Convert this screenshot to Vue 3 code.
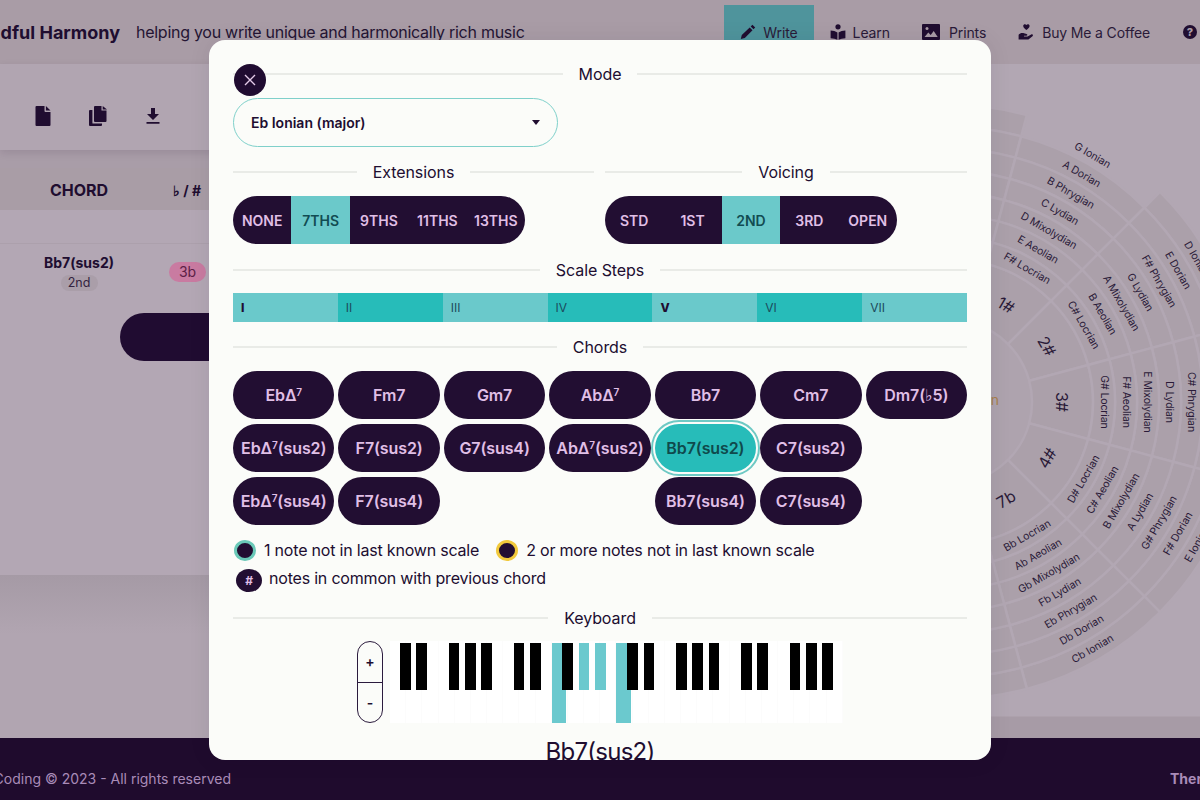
<script setup>
const cx = 950
const cy = 402
const polar = (r, deg) => {
  const a = (deg * Math.PI) / 180
  return [cx + r * Math.sin(a), cy - r * Math.cos(a)]
}
const sector = (r0, r1, a0, a1) => {
  const [x0, y0] = polar(r1, a0)
  const [x1, y1] = polar(r1, a1)
  const [x2, y2] = polar(r0, a1)
  const [x3, y3] = polar(r0, a0)
  return `M${x0} ${y0}A${r1} ${r1} 0 0 1 ${x1} ${y1}L${x2} ${y2}A${r0} ${r0} 0 0 0 ${x3} ${y3}Z`
}
const seg = [
  { a: 0, key: '', modes: [] },
  { a: 30, key: '1#', skip: true, modes: ['G Ionian', 'A Dorian', 'B Phrygian', 'C Lydian', 'D Mixolydian', 'E Aeolian', 'F# Locrian'] },
  { a: 60, key: '2#', modes: ['D Ionian', 'E Dorian', 'F# Phrygian', 'G Lydian', 'A Mixolydian', 'B Aeolian', 'C# Locrian'] },
  { a: 90, key: '3#', modes: ['A Ionian', 'B Dorian', 'C# Phrygian', 'D Lydian', 'E Mixolydian', 'F# Aeolian', 'G# Locrian'] },
  { a: 120, key: '4#', modes: ['E Ionian', 'F# Dorian', 'G# Phrygian', 'A Lydian', 'B Mixolydian', 'C# Aeolian', 'D# Locrian'] },
  { a: 150, key: '7b', modes: ['Cb Ionian', 'Db Dorian', 'Eb Phrygian', 'Fb Lydian', 'Gb Mixolydian', 'Ab Aeolian', 'Bb Locrian'] },
  { a: 180, key: '', modes: [] }
]
const bands = []
const labels = []
const keys = []
seg.forEach((s) => {
  const a0 = s.a - 15
  const a1 = s.a + 15
  const rot = s.a > 90 ? s.a - 180 : s.a
  bands.push(sector(82, 143, a0, a1))
  for (let i = 0; i < 7; i++) {
    if (s.skip && i === 0) continue
    bands.push(sector(143 + 22 * (6 - i), 165 + 22 * (6 - i), a0, a1))
  }
  if (s.key) {
    const [x, y] = polar(112, s.a)
    keys.push({ t: s.key, x, y, tr: `rotate(${rot} ${x} ${y})` })
  }
  s.modes.forEach((m, i) => {
    const [x, y] = polar(285 - 21.8 * i, s.a)
    labels.push({ t: m, x, y, tr: `rotate(${rot} ${x} ${y})` })
  })
})

const extensions = ['NONE', '7THS', '9THS', '11THS', '13THS']
const voicings = ['STD', '1ST', '2ND', '3RD', 'OPEN']
const steps = [
  { t: 'I', b: true }, { t: 'II' }, { t: 'III' }, { t: 'IV' },
  { t: 'V', b: true }, { t: 'VI' }, { t: 'VII' }
]
const chords = [
  [['Eb', true], ['Fm7'], ['Gm7'], ['Ab', true], ['Bb7'], ['Cm7'], ['Dm7(♭5)']],
  [['Eb', true, '(sus2)'], ['F7(sus2)'], ['G7(sus4)'], ['Ab', true, '(sus2)'], ['Bb7(sus2)'], ['C7(sus2)'], null],
  [['Eb', true, '(sus4)'], ['F7(sus4)'], null, null, ['Bb7(sus4)'], ['C7(sus4)'], null]
].flat().map((c) => c && { root: c[0], maj: !!c[1], tail: c[2] || '' })

const whites = Array.from({ length: 28 }, (_, i) => ({ on: i === 10 || i === 14 }))
const blackLefts = [400, 416.3, 448.7, 465, 481, 513.7, 530, 562.3, 578.7, 595, 627.3, 643.7, 676.3, 692.3, 708.7, 741.3, 757.3, 789.7, 806, 822.3]
const blacks = blackLefts.map((x) => ({ left: x - 390, on: x === 578.7 || x === 595 }))
</script>

<template>
  <div class="page">
    <header class="top">
      <div class="brand"><span>Mindful Harmony</span></div>
      <div class="tag">helping you write unique and harmonically rich music</div>
      <nav class="nav">
        <a class="tab active">
          <svg width="16" height="16" viewBox="0 0 16 16"><path d="M12.4 .8l2.8 2.8-1.7 1.7-2.8-2.8zM9.7 3.5l2.8 2.8-7.7 7.7-4 1 1-4z" /></svg>
          <span>Write</span>
        </a>
        <a class="tab">
          <svg width="16" height="16" viewBox="0 0 16 16"><circle cx="8" cy="2.8" r="2.6" /><path d="M.6 6.6c2.6 0 5 .7 6.8 2v7.2c-1.8-1-4.2-1.5-6.8-1.6zM15.4 6.6c-2.6 0-5 .7-6.8 2v7.2c1.8-1 4.2-1.5 6.8-1.6z" /></svg>
          <span>Learn</span>
        </a>
        <a class="tab prints">
          <svg width="18" height="16" viewBox="0 0 18 16"><rect width="18" height="16" rx="1" /><path class="cut" d="M2.5 13l3.8-4.6 2.4 2.6 3-4 4 6z" /><circle class="cut" cx="5" cy="4.6" r="1.5" /></svg>
          <span>Prints</span>
        </a>
        <a class="tab coffee">
          <svg width="16" height="16" viewBox="0 0 16 16"><path d="M8.4 .9c-1.1-1.2-3.2-.6-3.2 1.1 0 1.6 2 3 3.2 4 1.2-1 3.2-2.4 3.2-4 0-1.7-2.1-2.3-3.2-1.1zM.6 10.8c1.2-1.6 3-2.2 4.6-1.8l3.4.9c1.2.3 1 1.9-.2 1.9H6v.8h3.6l3.6-2.2c1.2-.6 2.4.8 1.3 1.8L10.4 15.5H.6z" /></svg>
          <span>Buy Me a Coffee</span>
        </a>
        <span class="help">?</span>
      </nav>
    </header>

    <main class="main">
      <section class="left">
        <div class="toolbar">
          <svg width="16" height="20" viewBox="0 0 15 20"><path d="M0 1a1 1 0 0 1 1-1h8v5a1 1 0 0 0 1 1h5v13a1 1 0 0 1-1 1H1a1 1 0 0 1-1-1zM10.4 0L15 4.6h-4.6z" /></svg>
          <svg width="19" height="20" viewBox="0 0 19 20"><path d="M5 1a1 1 0 0 1 1-1h6.5v4.5h5V15a1 1 0 0 1-1 1H6a1 1 0 0 1-1-1zM13.7 0L18 3.500h-4.300z" /><path d="M3.400 4H1a1 1 0 0 0-1 1v14a1 1 0 0 0 1 1h11a1 1 0 0 0 1-1v-1.500H4a.6.6 0 0 1-.6-.6z" /></svg>
          <svg width="14" height="16" viewBox="0 0 14 16"><path d="M5 0h4v6h4l-6 6-6-6h4zM.5 14h13v1.800H.5z" /></svg>
        </div>
        <div class="card">
          <div class="thead">
            <div class="th-chord">CHORD</div>
            <div class="th-acc">♭ / #</div>
          </div>
          <div class="blank"></div>
          <div class="row">
            <div class="cell-chord">
              <strong>Bb7(sus2)</strong>
              <span class="inv">2nd</span>
            </div>
            <span class="acc">3b</span>
          </div>
          <div class="add"></div>
        </div>
      </section>
      <section class="right">
        <div class="panel">
          <svg class="wheel" width="600" height="653" viewBox="600 64 600 653">
            <circle :cx="cx" :cy="cy" r="82" fill="#aea3ae" />
            <path v-for="(d, i) in bands" :key="i" :d="d" class="band" />
            <text x="999" :y="cy - 3" class="center">Eb Ionian</text>
            <text v-for="k in keys" :key="k.t" :x="k.x" :y="k.y" :transform="k.tr" class="keytxt">{{ k.t }}</text>
            <text v-for="l in labels" :key="l.t" :x="l.x" :y="l.y" :transform="l.tr" class="mode">{{ l.t }}</text>
          </svg>
        </div>
      </section>
    </main>

    <footer class="foot">
      <div class="copy"><span>Mindful Coding © 2023 - All rights reserved</span></div>
      <div class="theme">Theme</div>
    </footer>

    <div class="modal">
      <button class="close" aria-label="Close">
        <svg width="12" height="12" viewBox="0 0 12 12"><path d="M1 1l10 10M11 1L1 11" /></svg>
      </button>
      <div class="divider">Mode</div>
      <div class="select">
        <span>Eb Ionian (major)</span>
        <svg width="8" height="5" viewBox="0 0 8 5"><path d="M0 0h8L4 5z" /></svg>
      </div>
      <div class="cols">
        <div class="col">
          <div class="divider">Extensions</div>
          <div class="join">
            <button v-for="e in extensions" :key="e" :class="{ on: e === '7THS' }">{{ e }}</button>
          </div>
        </div>
        <div class="col">
          <div class="divider">Voicing</div>
          <div class="join">
            <button v-for="v in voicings" :key="v" :class="{ on: v === '2ND' }">{{ v }}</button>
          </div>
        </div>
      </div>
      <div class="divider d-steps">Scale Steps</div>
      <div class="steps">
        <div v-for="(s, i) in steps" :key="s.t" class="step" :class="{ alt: i % 2 === 1, bold: s.b }">{{ s.t }}</div>
      </div>
      <div class="divider d-chords">Chords</div>
      <div class="chords">
        <template v-for="(c, i) in chords" :key="i">
          <button v-if="c" class="chord" :class="{ sel: c.root === 'Bb7(sus2)' }">{{ c.root }}<template v-if="c.maj">Δ<sup>7</sup></template>{{ c.tail }}</button>
          <span v-else></span>
        </template>
      </div>
      <div class="legend">
        <span class="dot teal"></span><span class="lt">1 note not in last known scale</span>
        <span class="dot gold"></span><span>2 or more notes not in last known scale</span>
      </div>
      <div class="legend l2">
        <span class="hash">#</span><span class="lift">notes in common with previous chord</span>
      </div>
      <div class="divider d-keys">Keyboard</div>
      <div class="kbd">
        <div class="zoom">
          <span>+</span>
          <span>-</span>
        </div>
        <div class="piano">
          <div v-for="(w, i) in whites" :key="i" class="white"><i v-if="w.on"></i></div>
          <div v-for="(b, i) in blacks" :key="i" class="black" :class="{ on: b.on }" :style="{ left: b.left + 'px' }"></div>
        </div>
      </div>
      <div class="title">Bb7(sus2)</div>
    </div>
  </div>
</template>

<style scoped>
.page {
  position: relative;
  width: 1200px;
  height: 800px;
  overflow: hidden;
  display: flex;
  flex-direction: column;
  background: #a99da8;
  color: #200d30;
  font-family: Inter, "Noto Sans", sans-serif;
}
.top {
  height: 64px;
  flex: none;
  display: flex;
  align-items: center;
  background: #a99ca6;
  white-space: nowrap;
}
.brand {
  width: 120px;
  display: flex;
  justify-content: flex-end;
  font-size: 18px;
  font-weight: 700;
}
.tag {
  margin-left: 16px;
  font-size: 16px;
  letter-spacing: -0.27px;
  color: #241433;
}
.nav {
  margin-left: auto;
  display: flex;
  align-items: center;
  height: 64px;
  font-size: 14px;
  letter-spacing: -0.1px;
  color: #2a1a38;
}
.tab {
  display: flex;
  align-items: center;
  gap: 7px;
  height: 55px;
  margin-top: 9px;
  padding: 0 16px 9px;
}
.tab.prints { gap: 9px; }
.tab.coffee { gap: 8px; letter-spacing: -0.16px; }
.tab svg { fill: #200d30; flex: none; }
.tab svg .cut { fill: #a99ca6; }
.tab.active {
  background: #4f949c;
}
.help {
  width: 14px;
  height: 14px;
  margin: 0 3px 0 17px;
  border-radius: 50%;
  background: #200d30;
  color: #a99ca6;
  font-size: 11px;
  font-weight: 800;
  line-height: 14px;
  text-align: center;
}
.main {
  flex: 1;
  display: flex;
  min-height: 0;
}
.left {
  width: 600px;
  display: flex;
  flex-direction: column;
  background: linear-gradient(#a59aa5, #b1a5b1 60px);
  background-position: 0 510px;
  background-repeat: no-repeat;
}
.toolbar {
  height: 86px;
  flex: none;
  box-sizing: border-box;
  display: flex;
  align-items: center;
  gap: 38px;
  padding: 18px 0 0 35px;
  background: #b1a5b1;
  box-shadow: 0 3px 8px rgba(40, 20, 50, .12);
}
.toolbar svg { fill: #200d30; flex: none; }
.card {
  margin-top: 18px;
  height: 407px;
  background: #b3a7b4;
}
.thead {
  height: 42px;
  box-sizing: border-box;
  padding-top: 2px;
  display: flex;
  align-items: center;
  background: #a99da6;
  font-weight: 700;
}
.th-chord {
  width: 158px;
  text-align: center;
  font-size: 16px;
}
.th-acc {
  width: 58px;
  text-align: center;
  font-size: 14px;
}
.blank {
  height: 33px;
  border-bottom: 1px solid #aca0ac;
}
.row {
  display: flex;
  height: 69px;
  align-items: center;
}
.cell-chord {
  width: 158px;
  display: flex;
  flex-direction: column;
  align-items: center;
  gap: 4.5px;
  margin-top: -12.5px;
}
.cell-chord strong {
  font-size: 14px;
  font-weight: 700;
  line-height: 17px;
}
.inv {
  width: 37px;
  height: 16px;
  border-radius: 8px;
  background: #aa9ea9;
  font-size: 12.5px;
  line-height: 16px;
  text-align: center;
  color: #33233f;
}
.acc {
  margin: -13px 0 0 11px;
  width: 37px;
  height: 20px;
  border-radius: 10px;
  background: #c97ba1;
  color: #5c2147;
  font-size: 14px;
  line-height: 20px;
  text-align: center;
}
.add {
  margin-left: 120px;
  height: 48px;
  border-radius: 24px;
  background: #200c31;
}
.right {
  flex: 1;
  background: #a79ba6;
}
.panel {
  height: 653px;
  background: #b2a7b3;
  border-bottom: 1px solid #ada1ac;
  box-sizing: border-box;
  overflow: hidden;
}
.wheel { display: block; }
.band {
  fill: #aba0aa;
  stroke: #b2a7b3;
  stroke-width: 2.5;
}
.center {
  fill: #a9804f;
  font-size: 14px;
  text-anchor: end;
  dominant-baseline: central;
}
.keytxt {
  fill: #2a1a38;
  font-size: 16px;
  text-anchor: middle;
  dominant-baseline: central;
}
.mode {
  fill: #2a1a38;
  font-size: 10.5px;
  letter-spacing: -0.1px;
  text-anchor: middle;
  dominant-baseline: central;
}
.foot {
  height: 62px;
  flex: none;
  display: flex;
  align-items: center;
  justify-content: space-between;
  background: #1f0b2d;
  color: #a98bb8;
  font-size: 14px;
  white-space: nowrap;
  overflow: hidden;
}
.copy {
  width: 231px;
  display: flex;
  justify-content: flex-end;
  margin-top: 18px;
}
.theme {
  width: 30px;
  margin-top: 18px;
  font-weight: 700;
}

.modal {
  position: absolute;
  left: 209px;
  top: 40px;
  width: 782px;
  height: 720px;
  box-sizing: border-box;
  padding: 22px 24px 0;
  overflow: hidden;
  border-radius: 16px;
  background: #fbfcf9;
  box-shadow: 0 0 22px rgba(30, 15, 40, .08);
}
.close {
  position: absolute;
  left: 25px;
  top: 24px;
  width: 32px;
  height: 32px;
  padding: 0;
  border: 0;
  border-radius: 50%;
  background: #200c31;
  display: flex;
  align-items: center;
  justify-content: center;
}
.close path {
  stroke: #e4cbe9;
  stroke-width: 1.4;
  fill: none;
}
.divider {
  height: 24px;
  display: flex;
  align-items: center;
  gap: 16px;
  font-size: 16px;
  line-height: 24px;
  letter-spacing: -0.07px;
  color: #200d30;
  white-space: nowrap;
}
.divider::before,
.divider::after {
  content: "";
  flex: 1;
  height: 2px;
  margin-top: -1px;
  background: #e9ebe7;
}
.select {
  width: 325px;
  height: 49px;
  box-sizing: border-box;
  margin-top: 12px;
  padding: 0 17px;
  display: flex;
  align-items: center;
  justify-content: space-between;
  border: 1px solid #7fd0ca;
  border-radius: 25px;
  font-size: 14px;
  font-weight: 600;
}
.select svg { fill: #200d30; }
.cols {
  margin-top: 13px;
  display: grid;
  grid-template-columns: 361px 1fr;
  gap: 11px;
}
.join {
  width: 292px;
  height: 48px;
  margin-top: 12px;
  display: grid;
  grid-template-columns: repeat(5, 1fr);
  border-radius: 24px;
  overflow: hidden;
  background: #220e32;
}
.join button {
  padding: 0;
  border: 0;
  background: transparent;
  color: #e0bfe6;
  font: 600 14px Inter, sans-serif;
}
.join button.on {
  background: #6bc9ca;
  color: #124c52;
}
.d-steps { margin-top: 14px; }
.steps {
  height: 29px;
  margin-top: 11px;
  display: grid;
  grid-template-columns: repeat(7, 1fr);
}
.step {
  padding-left: 8px;
  background: #6ac9cb;
  color: #1c4a5c;
  font-size: 12px;
  line-height: 29px;
}
.step.alt { background: #27bcb9; }
.step.bold { font-weight: 800; color: #200d30; }
.d-chords { margin-top: 13px; }
.chords {
  margin-top: 12px;
  display: grid;
  grid-template-columns: repeat(7, 1fr);
  grid-auto-rows: 48px;
  gap: 5px 4px;
}
.chord {
  padding: 0;
  border: 0;
  border-radius: 24px;
  background: #220e32;
  color: #e0bfe6;
  font: 600 16px Inter, "DejaVu Sans", sans-serif;
  letter-spacing: -0.1px;
  white-space: nowrap;
}
.chord sup {
  font-size: 10px;
  line-height: 0;
  vertical-align: 5px;
}
.chord.sel {
  background: #27bcb9;
  color: #0f4a4c;
  outline: 2px solid #6ec9c4;
  outline-offset: 2px;
}
.legend {
  margin-top: 15px;
  height: 21px;
  padding-left: 1px;
  display: flex;
  align-items: center;
  font-size: 16px;
  line-height: 21px;
  letter-spacing: -0.2px;
}
.dot {
  width: 22px;
  height: 21px;
  box-sizing: border-box;
  border-radius: 50%;
  background: #220e32;
  border: 3px solid;
  margin-right: 8px;
}
.dot.teal { border-color: #6ac9b8; }
.dot.gold { border-color: #f1c93c; }
.lt { margin-right: 17px; }
.legend.l2 {
  margin-top: 7px;
  height: 24px;
  padding-left: 3px;
}
.lift { margin-bottom: 3px; }
.hash {
  width: 26px;
  height: 23px;
  margin-right: 7px;
  border-radius: 50%;
  background: #220e32;
  color: #e0bfe6;
  font-size: 12px;
  font-weight: 700;
  line-height: 23px;
  text-align: center;
}
.d-keys { margin-top: 14px; }
.kbd {
  margin-top: 11px;
  padding-left: 124px;
  display: flex;
  gap: 7px;
}
.zoom {
  width: 26px;
  height: 82px;
  box-sizing: border-box;
  display: grid;
  grid-template-rows: 1fr 1fr;
  border: 1px solid #2b1b3d;
  border-radius: 13px;
  font-size: 14px;
  font-weight: 600;
  text-align: center;
}
.zoom span {
  line-height: 40px;
}
.zoom span:first-child { border-bottom: 1.5px solid #2b1b3d; }
.piano {
  position: relative;
  width: 453px;
  height: 82px;
  display: flex;
  background: #fff;
}
.white {
  flex: 1;
  position: relative;
  border-right: 1px solid #fcfcfc;
}
.white i {
  position: absolute;
  left: 0;
  top: 2px;
  bottom: 0;
  width: 14.3px;
  background: #6bc9ce;
}
.black {
  position: absolute;
  top: 2px;
  width: 10.5px;
  height: 47px;
  background: #000;
}
.black.on { background: #6bc9ce; }
.title {
  margin-top: 13px;
  text-align: center;
  font-size: 24px;
  line-height: 32px;
  letter-spacing: -0.75px;
}
</style>
